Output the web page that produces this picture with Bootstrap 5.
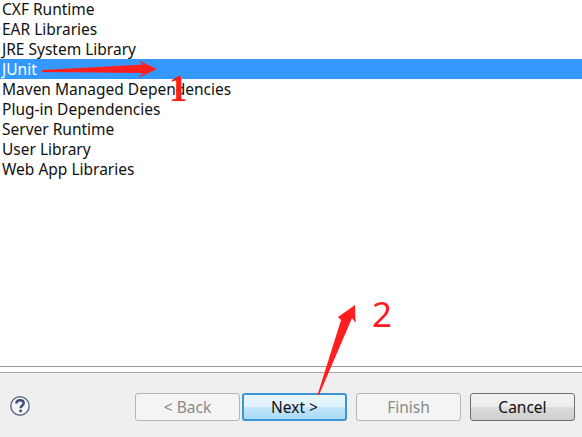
<!DOCTYPE html>
<html lang="en">
<head>
<meta charset="utf-8">
<title>Add Library</title>
<link href="https://cdn.jsdelivr.net/npm/bootstrap@5.3.0/dist/css/bootstrap.min.css" rel="stylesheet">
<style>
html, body { height: 437px; overflow: hidden; }
body { width: 582px; background: #fff; font-family: "Noto Sans", "Open Sans", sans-serif; font-size: 15.5px; color: #111; position: relative; }
.lib-pane { height: 366px; }
.lib-row { height: 20px; line-height: 21px; padding-left: 2px; white-space: nowrap; }
.lib-row:first-child { height: 19px; line-height: 19px; }
.lib-row.is-on { background: #3399ff; color: #fff; }
.rule-a { height: 1px; background: #9a9ca3; }
.rule-gap { height: 5px; background: #fff; }
.rule-b { height: 1px; background: #a8a8a8; }
.foot-bar { height: 64px; background: #efefef; padding: 20px 7px 0 10px; }
.help-ico { width: 20px; height: 20px; margin-top: 3px; }
.dlg-btn { width: 105px; height: 28px; padding: 0; font-size: 15.5px; line-height: 24px; border-radius: 3px; border: 1px solid #6f6f6f; color: #111; font-family: inherit;
  background: linear-gradient(#f3f3f3 0, #ececec 48%, #dcdcdc 52%, #cfcfcf 100%); }
.dlg-btn.is-default { border: 2px solid #3b95d6; background: linear-gradient(#e9f6fe 0, #e0f2fd 48%, #c4e5f9 52%, #a9daf6 100%); }
.dlg-btn:disabled { opacity: 1; color: #8a8a8a; border: 1px solid #b5b5b5; background: #f4f4f4; }
.btn-set { gap: 2px; }
.gap-nine { margin-left: 9px; }
.mark-layer { position: absolute; left: 0; top: 0; width: 582px; height: 437px; pointer-events: none; }
.ann { position: absolute; color: #ff1c1c; line-height: 1; }
.ann-one { left: 169px; top: 70px; font-size: 37px; font-family: "Liberation Serif", serif; font-weight: 700; }
.ann-two { left: 372px; top: 296px; font-size: 35px; font-family: "Noto Sans", sans-serif; }
</style>
</head>
<body>
<div class="lib-pane">
  <div class="lib-row">CXF Runtime</div>
  <div class="lib-row">EAR Libraries</div>
  <div class="lib-row">JRE System Library</div>
  <div class="lib-row is-on">JUnit</div>
  <div class="lib-row">Maven Managed Dependencies</div>
  <div class="lib-row">Plug-in Dependencies</div>
  <div class="lib-row">Server Runtime</div>
  <div class="lib-row">User Library</div>
  <div class="lib-row">Web App Libraries</div>
</div>
<div class="rule-a"></div>
<div class="rule-gap"></div>
<div class="rule-b"></div>
<div class="foot-bar d-flex justify-content-between align-items-start">
  <svg class="help-ico" viewBox="0 0 20 20" aria-label="Help">
    <circle cx="10" cy="10" r="9.2" fill="#f4f5f8" stroke="#5d6b8c" stroke-width="1.4"/>
    <path d="M6.4 7.6c0-2 1.6-3.3 3.7-3.3s3.6 1.1 3.6 3c0 2.5-3.1 2.5-3.1 4.9" fill="none" stroke="#3f4d72" stroke-width="2.4"/>
    <rect x="9.3" y="13.7" width="2.6" height="2.5" fill="#3f4d72"/>
  </svg>
  <div class="d-flex">
    <div class="d-flex btn-set">
      <button class="btn dlg-btn" disabled>&lt; Back</button>
      <button class="btn dlg-btn is-default">Next &gt;</button>
    </div>
    <button class="btn dlg-btn gap-nine" disabled>Finish</button>
    <button class="btn dlg-btn gap-nine">Cancel</button>
  </div>
</div>
<div class="mark-layer">
  <svg width="582" height="437" viewBox="0 0 582 437" class="position-absolute top-0 start-0">
    <polygon points="42,70 143,64.5 138,60 157,69 138,78 143,73 42,72" fill="#ff1f1f"/>
    <polygon points="317.5,395 341,320 338,317 355,305 355.5,323 352,318 319,395" fill="#ff1f1f"/>
  </svg>
  <span class="ann ann-one">1</span>
  <span class="ann ann-two">2</span>
</div>
<script src="https://cdn.jsdelivr.net/npm/bootstrap@5.3.0/dist/js/bootstrap.bundle.min.js"></script>
</body>
</html>
